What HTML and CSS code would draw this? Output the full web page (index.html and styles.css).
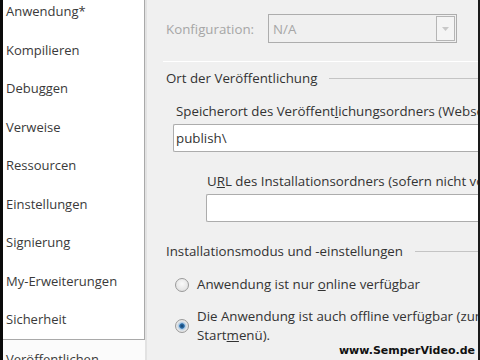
FILE: index.html
```html
<!DOCTYPE html>
<html lang="de">
<head>
<meta charset="utf-8">
<title>Projekteigenschaften – Veröffentlichen</title>
<link rel="stylesheet" href="styles.css">
</head>
<body>
<div class="screen">
  <div class="edge-left"></div>
  <nav class="sidebar">
    <ul class="tabs">
      <li class="tab">Anwendung*</li>
      <li class="tab">Kompilieren</li>
      <li class="tab">Debuggen</li>
      <li class="tab">Verweise</li>
      <li class="tab">Ressourcen</li>
      <li class="tab">Einstellungen</li>
      <li class="tab">Signierung</li>
      <li class="tab">My-Erweiterungen</li>
      <li class="tab">Sicherheit</li>
    </ul>
    <div class="tab-active">Veröffentlichen</div>
  </nav>
  <main class="content">
    <div class="config-row">
      <span class="config-label">Konfiguration:</span>
      <div class="combo">
        <span class="combo-value">N/A</span>
        <span class="combo-btn"><svg width="7" height="4" viewBox="0 0 7 4"><path d="M0 0h7L3.5 4z" fill="#c8c8c8"/></svg></span>
      </div>
    </div>
    <div class="rule"></div>

    <div class="group-head"><span>Ort der Veröffentlichung</span><span class="group-line"></span></div>
    <div class="field-label">Speicherort des Veröffent<u>l</u>ichungsordners (Webserver, FTP-Server oder Dateipfad):</div>
    <div class="textbox textbox-wide">publish\</div>
    <div class="field-label field-label-indent">U<u>R</u>L des Installationsordners (sofern nicht vom Veröffentlichungsordner abweichend):</div>
    <div class="textbox textbox-indent"></div>

    <div class="group-head group-head-2"><span>Installationsmodus und -einstellungen</span><span class="group-line"></span></div>
    <div class="radio-row">
      <span class="radio"></span>
      <span class="radio-text">Anwendung ist nur <u>o</u>nline verfügbar</span>
    </div>
    <div class="radio-row radio-row-2">
      <span class="radio radio-on"></span>
      <span class="radio-text">Die Anwendung ist auch offline verfügbar (zum Starten über das<br>Start<u>m</u>enü).</span>
    </div>
    <div class="watermark">www.SemperVideo.de</div>
  </main>
  <div class="edge-right"></div>
</div>
</body>
</html>
```
FILE: styles.css
```css
* { box-sizing: border-box; }
html, body { margin: 0; padding: 0; }
body {
  width: 480px;
  height: 360px;
  overflow: hidden;
  background: #000;
  font-family: "Open Sans", "Noto Sans", sans-serif;
  font-size: 13px;
  color: #333;
}
.screen {
  display: flex;
  width: 480px;
  height: 360px;
  overflow: hidden;
}
.edge-left { width: 3px; flex: none; background: #0a0a0a; }
.edge-right { width: 2px; flex: none; background: #1a1a1a; }

.sidebar {
  width: 142px;
  flex: none;
  background: #f3f3f3;
  display: flex;
  flex-direction: column;
}
.tabs {
  list-style: none;
  margin: -8px 0 0 0;
  padding: 0;
  background: #fff;
  border-right: 1px solid #a9a9a9;
  border-bottom: 1px solid #a9a9a9;
}
.tab {
  height: 38.5px;
  line-height: 38.5px;
  padding-left: 3px;
  white-space: nowrap;
  color: #3a3a3a;
}
.tab-active {
  background: #fbfbfb;
  padding: 11px 0 0 3px;
  line-height: 16px;
  color: #3a3a3a;
}

.content {
  flex: 1;
  min-width: 0;
  background: #f0f0f0;
  border-left: 2px solid #e2e2e2;
  position: relative;
  padding-left: 19px;
  white-space: nowrap;
  overflow: hidden;
  font-size: 13.3px;
}
.config-row {
  display: flex;
  align-items: center;
  margin-top: 14px;
  height: 29px;
}
.config-label { color: #a6a6a6; width: 102px; }
.combo {
  width: 189px;
  height: 29px;
  border: 1px solid #adadad;
  background: #f0f0f0;
  display: flex;
  align-items: center;
  justify-content: space-between;
  padding: 0 1px 0 4px;
  color: #a6a6a6;
}
.combo-btn {
  width: 19px;
  height: 25px;
  border: 1px solid #b5b5b5;
  background: #f4f4f4;
  display: flex;
  align-items: center;
  justify-content: center;
}
.rule {
  height: 1px;
  background: #bcbcbc;
  margin: 18px 0 0 -3px;
  border-bottom: 1px solid #fff;
}
.group-head {
  display: flex;
  align-items: center;
  gap: 12px;
  height: 20px;
  margin-top: 6px;
}
.group-line {
  flex: 1;
  height: 1px;
  background: #c4c4c4;
}
.field-label {
  margin: 13px 0 0 10px;
  height: 20px;
  line-height: 20px;
}
.field-label-indent { margin: 19px 0 0 41px; }
.textbox {
  height: 28px;
  background: #fff;
  border: 1px solid #acacac;
  border-right: none;
  border-radius: 2px 0 0 2px;
  line-height: 26px;
  padding-left: 2px;
}
.textbox-wide { margin: 3px 0 0 7px; }
.textbox-indent { margin: 3px 0 0 40px; }
.group-head-2 { margin-top: 19px; }
.radio-row {
  display: flex;
  align-items: flex-start;
  gap: 8px;
  margin: 14px 0 0 9px;
}
.radio-row-2 { margin-top: 13px; align-items: center; }
.radio {
  width: 14px;
  height: 14px;
  flex: none;
  border-radius: 50%;
  border: 1px solid #9a9a9a;
  background: radial-gradient(circle at 50% 40%, #fafafa 0%, #e4e4e4 70%, #d0d0d0 100%);
  margin-top: 3px;
}
.radio-on {
  margin-top: 0;
  background: radial-gradient(circle, #0e3a66 0%, #2f73b0 28%, #a8c7e3 36%, #e8e8e8 60%, #d4d4d4 100%);
}
.radio-text { line-height: 19px; }
.watermark {
  position: absolute;
  right: 3px;
  bottom: 3px;
  font-family: "DejaVu Sans", Verdana, sans-serif;
  font-weight: bold;
  font-size: 11px;
  color: #111;
}
```
